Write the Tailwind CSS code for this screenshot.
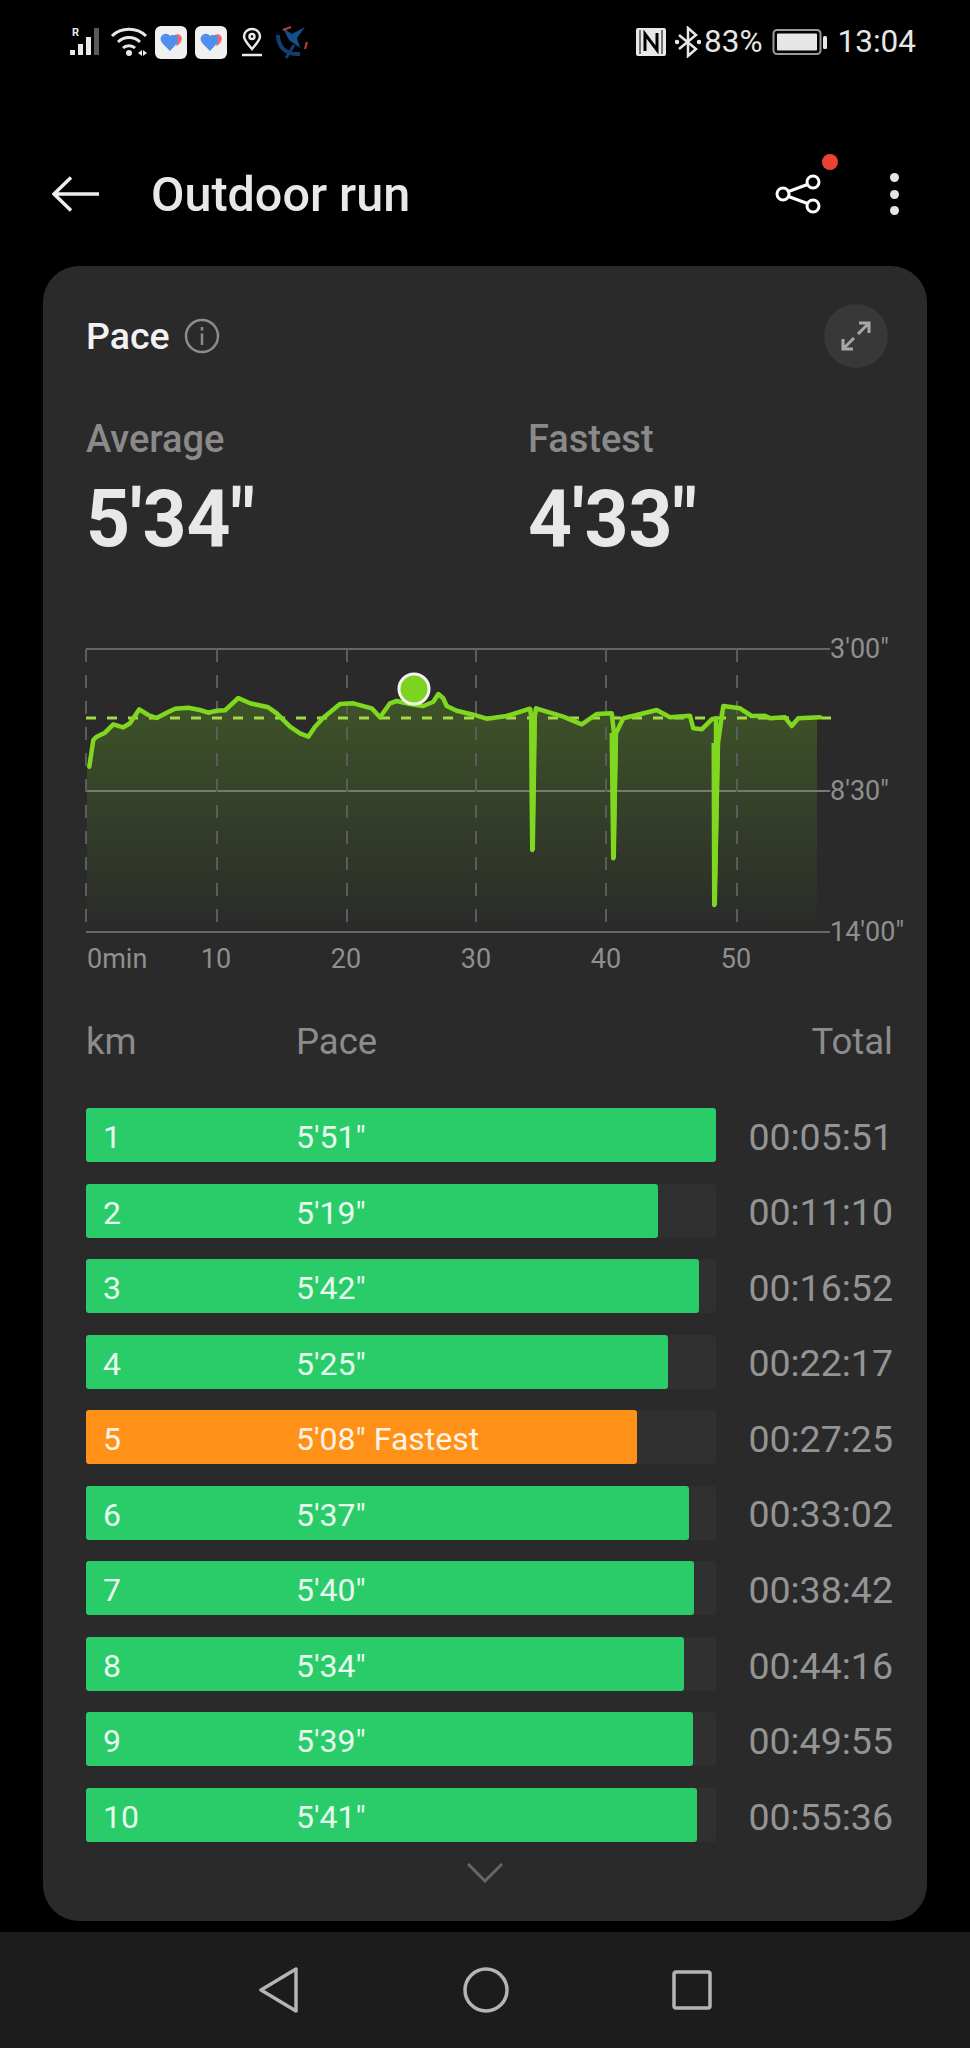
<!DOCTYPE html>
<html lang="en">
<head>
    <meta charset="UTF-8">
    <meta name="viewport" content="width=device-width, initial-scale=1.0">
    <title>Outdoor run</title>
    <script src="https://cdn.jsdelivr.net/npm/@tailwindcss/browser@4"></script>
</head>
<body class="bg-black font-[Roboto,sans-serif]">
<div class="flex h-[2048px] w-[970px] flex-col overflow-hidden">
    <!-- Status bar -->
    <div class="flex h-[84px] items-center justify-between pl-[68px] pr-[54px] text-[31.500px] leading-none text-[#e6e6e6]">
        <div class="flex items-center">
            <svg width="36" height="34" viewBox="0 0 36 34" fill="#e8e8e8">
                <text x="4" y="11" font-size="11" font-weight="700" font-family="Roboto">R</text>
                <rect x="2" y="25" width="5" height="5"/>
                <rect x="10" y="19" width="5" height="11"/>
                <rect x="18" y="12" width="5" height="18"/>
                <rect x="26" y="3" width="5" height="27" fill="#5a5a5a"/>
            </svg>
            <svg class="ml-[6px]" width="38" height="34" viewBox="0 0 38 34" fill="none" stroke="#e8e8e8" stroke-width="3">
                <path d="M2 11C11 2 27 2 36 11"/>
                <path d="M8 17C14 11 24 11 30 17"/>
                <path d="M13 23C16 20 22 20 25 23"/>
                <circle cx="19" cy="28" r="3" fill="#e8e8e8" stroke="none"/>
                <path d="M28 28l4-3v6zM33 25l4 3-4 3z" fill="#e8e8e8" stroke="none"/>
            </svg>
            <svg class="ml-[7px] rounded-[6px] bg-[#f0f0f0]" width="32" height="33" viewBox="0 0 32 33">
                <path d="M17 13C18 8 24 7 26 10C28 13 26 17 22 20Z" fill="#f0686a"/>
                <path d="M6 11C8 7 13 7 15 10C17 8 22 9 23 12C24 15 22 18 15 25C9 19 4 15 6 11Z" fill="#4f8ff0"/>
            </svg>
            <svg class="ml-[8px] rounded-[6px] bg-[#f0f0f0]" width="32" height="33" viewBox="0 0 32 33">
                <path d="M17 13C18 8 24 7 26 10C28 13 26 17 22 20Z" fill="#f0686a"/>
                <path d="M6 11C8 7 13 7 15 10C17 8 22 9 23 12C24 15 22 18 15 25C9 19 4 15 6 11Z" fill="#4f8ff0"/>
            </svg>
            <svg class="ml-[14px]" width="22" height="30" viewBox="0 0 22 30" fill="none" stroke="#e8e8e8" stroke-width="2.500">
                <path d="M11 22C6 16 3 13 3 9.500C3 5 6.500 2 11 2C15.500 2 19 5 19 9.500C19 13 16 16 11 22Z"/>
                <circle cx="11" cy="9.500" r="2.500"/>
                <path d="M1 28H21"/>
            </svg>
            <svg class="ml-[13px]" width="34" height="34" viewBox="0 0 34 34" fill="none">
                <path d="M2 10C2 22 10 30 24 29" stroke="#123f70" stroke-width="4"/>
                <path d="M7 3L13 15L24 23L21 13L29 2L16 9Z" fill="#14508a"/>
                <path d="M7 5L15 2" stroke="#c8353a" stroke-width="2"/>
                <path d="M31 17L29 24" stroke="#c8353a" stroke-width="2"/>
                <path d="M10 33L18 20" stroke="#123f70" stroke-width="3"/>
            </svg>
        </div>
        <div class="flex items-center">
            <svg width="32" height="30" viewBox="0 0 32 30">
                <rect x="1" y="1" width="30" height="28" rx="2" fill="#e8e8e8"/>
                <path d="M10 24V7L22 23V6" fill="none" stroke="#000" stroke-width="3"/>
                <path d="M5 3V27M27 3V27" stroke="#000" stroke-width="1"/>
            </svg>
            <svg class="ml-[8px]" width="26" height="32" viewBox="0 0 26 32" fill="none" stroke="#e8e8e8" stroke-width="2.500">
                <path d="M4 9L21 23L13 30V2L21 9L4 23"/>
                <circle cx="2" cy="16" r="1" fill="#e8e8e8"/>
                <circle cx="24" cy="16" r="1" fill="#e8e8e8"/>
            </svg>
            <span class="ml-[3px]">83%</span>
            <svg class="ml-[9px]" width="56" height="28" viewBox="0 0 56 28">
                <rect x="1.500" y="2" width="47" height="24" rx="3.500" fill="none" stroke="#9a9a9a" stroke-width="2"/>
                <rect x="5" y="5.500" width="40" height="17" rx="1" fill="#e6e6e6"/>
                <rect x="51" y="8" width="4" height="13" rx="1.500" fill="#e6e6e6"/>
            </svg>
            <span class="ml-[10px]">13:04</span>
        </div>
    </div>

    <!-- Title bar -->
    <div class="relative flex h-[182px] items-center pl-[52px] pr-[71px] pt-[38px]">
        <svg width="48" height="36" viewBox="0 0 48 36" fill="none" stroke="#eeeeee" stroke-width="3.500">
            <path d="M47 18H2M19 1.500L2 18L19 34.500"/>
        </svg>
        <h1 class="ml-[51px] pt-[2px] text-[48.500px] font-medium leading-none text-[#e8e8e8]">Outdoor run</h1>
        <div class="ml-auto flex items-center">
            <svg width="46" height="40" viewBox="0 0 46 40" fill="none" stroke="#ffffff" stroke-width="3">
                <circle cx="8" cy="20" r="6"/>
                <circle cx="38" cy="8" r="6"/>
                <circle cx="38" cy="32" r="6"/>
                <path d="M13.500 17.500L32.500 10.500M13.500 22.500L32.500 29.500"/>
            </svg>
            <div class="ml-[69px] flex flex-col gap-[7.500px]">
                <div class="h-[9px] w-[9px] rounded-full bg-[#e6e6e6]"></div>
                <div class="h-[9px] w-[9px] rounded-full bg-[#e6e6e6]"></div>
                <div class="h-[9px] w-[9px] rounded-full bg-[#e6e6e6]"></div>
            </div>
        </div>
        <div class="absolute left-[822px] top-[70px] h-4 w-4 rounded-full bg-[#ea4335]"></div>
    </div>

    <!-- Pace card -->
    <div class="mx-[43px] h-[1655px] w-[884px] rounded-[36px] bg-[#2a2a2a] pl-[43px] pr-[34px]">
        <div class="flex h-[140px] items-center justify-between pr-[5px]">
            <div class="flex items-center">
                <span class="text-[37.500px] font-medium text-[#f2f2f2]">Pace</span>
                <svg class="ml-[14px]" width="36" height="36" viewBox="0 0 36 36" fill="none" stroke="#8c8c8c" stroke-width="2.500">
                    <circle cx="18" cy="18" r="16"/>
                    <path d="M18 15.500V27M18 9V12.500"/>
                </svg>
            </div>
            <div class="flex h-16 w-16 items-center justify-center rounded-full bg-[#383838]">
                <svg width="30" height="30" viewBox="0 0 30 30" fill="none" stroke="#a8a8a8" stroke-width="3">
                    <path d="M17 13L28 2M18 2H28V12M13 17L2 28M2 18V28H12"/>
                </svg>
            </div>
        </div>

        <div class="grid h-[160px] grid-cols-[442px_1fr] content-start pt-[10px]">
            <div>
                <p class="text-[38px] font-medium leading-[46px] text-[#8a8a8a]">Average</p>
                <p class="mt-[14.500px] origin-left scale-x-[0.96] text-[80px] font-bold leading-[84px] text-[#e8e8e8]">5'34"</p>
            </div>
            <div>
                <p class="text-[38px] font-medium leading-[46px] text-[#8a8a8a]">Fastest</p>
                <p class="mt-[14.500px] origin-left scale-x-[0.96] text-[80px] font-bold leading-[84px] text-[#e8e8e8]">4'33"</p>
            </div>
        </div>

        <!-- Chart: viewBox uses page coordinates -->
        <svg class="-ml-[43px] mt-[54px] block" width="884" height="360" viewBox="43 620 884 360">
            <defs>
                <linearGradient id="areaFill" x1="0" y1="0" x2="0" y2="1">
                    <stop offset="0" stop-color="#7ed321" stop-opacity="0.25"/>
                    <stop offset="1" stop-color="#7ed321" stop-opacity="0"/>
                </linearGradient>
            </defs>
            <path fill="url(#areaFill)" d="M87 932V766.700L89.300 766.700L93.300 740L105 732.700L113.300 724.300L123.300 727.300L130 723.300L139.300 709.300L148.300 715L156.700 718L166.700 712.700L175 708.700L188.300 707.700L200 710L208.300 712.700L225 710.300L238.300 698L250 703.300L268.300 707.300L276.700 713.300L290 726.700L300 733.300L308.300 736.700L315 726.700L323.300 717.700L340 704L353.300 703.300L371.700 708.300L380 717.300L390 703.300L396.700 701L410 704L423.300 706L433.300 701.700L438.300 694L443.300 698.300L446.700 706L456.700 710.700L473.300 714.700L486.700 718.700L506.700 716L530 708.700L536 708.300L546.700 711.700L563.300 716.700L581.700 724.300L596.700 714L611.700 713.300L623.300 718.300L636.700 715L656.700 710L670 717.300L690 715.700L693.300 728.300L701.700 729.300L711.700 719.300L716 718.300L723.300 706L740 708.300L751.700 716L765 715.700L770 718.300L785 717.300L791.700 726L798.300 718.300L817 717.300V932Z"/>
            <g stroke="#666666" stroke-width="2">
                <path d="M86 649H830M86 932H830"/>
                <path stroke="#7a7a72" d="M86 791H830"/>
            </g>
            <g stroke="#5c5c5c" stroke-width="2" stroke-dasharray="13 13" fill="none">
                <path d="M86 649V932M217 649V932M347 649V932M476 649V932M606 649V932M737 649V932"/>
            </g>
            <path d="M86 718H838" stroke="#a6d84a" stroke-width="3" stroke-dasharray="10 11" fill="none"/>
            <path fill="none" stroke="#7fd81f" stroke-width="4.500" stroke-linejoin="round" stroke-linecap="round" d="M89.300 766.700L93.300 740L96.700 736.700L105 732.700L113.300 724.300L123.300 727.300L130 723.300L139.300 709.300L148.300 715L156.700 718L166.700 712.700L175 708.700L188.300 707.700L200 710L208.300 712.700L216.700 710.700L225 710.300L238.300 698L250 703.300L268.300 707.300L276.700 713.300L290 726.700L300 733.300L308.300 736.700L315 726.700L323.300 717.700L340 704L353.300 703.300L371.700 708.300L380 717.300L390 703.300L396.700 701L410 704L423.300 706L433.300 701.700L438.300 694L443.300 698.300L446.700 706L456.700 710.700L473.300 714.700L486.700 718.700L506.700 716L530 708.700L531.700 720L532.300 850L534.300 720L536 708.300L546.700 711.700L563.300 716.700L581.700 724.300L596.700 714L611.700 713.300L614 733.300L613.300 858.300L616 733.300L623.300 718.300L636.700 715L656.700 710L670 717.300L690 715.700L693.300 728.300L701.700 729.300L711.700 719.300L716 718.300L716 743L714.300 905L718 743L723.300 706L740 708.300L751.700 716L765 715.700L770 718.300L785 717.300L791.700 726L798.300 718.300L820 717.300"/>
            <path fill="#7fd81f" d="M529 720H537L535 850H530ZM609.500 733H618L616 858H611ZM711.500 743H720L717 905H712Z"/>
            <circle cx="414" cy="689" r="15" fill="#7ed321" stroke="#f2f2f2" stroke-width="3"/>
            <g font-size="27" fill="#8f8f8f" font-family="Roboto">
                <text x="87" y="968">0min</text>
                <text x="216" y="968" text-anchor="middle">10</text>
                <text x="346" y="968" text-anchor="middle">20</text>
                <text x="476" y="968" text-anchor="middle">30</text>
                <text x="606" y="968" text-anchor="middle">40</text>
                <text x="736" y="968" text-anchor="middle">50</text>
                <text x="830" y="658">3'00"</text>
                <text x="830" y="800">8'30"</text>
                <text x="830" y="941">14'00"</text>
            </g>
        </svg>

        <!-- Splits table -->
        <div class="mt-[41px] flex h-[43px] items-center text-[36.500px] leading-none text-[#8c8c8c]">
            <span class="w-[210px]">km</span>
            <span>Pace</span>
            <span class="ml-auto">Total</span>
        </div>
        <div class="mt-[44px] flex flex-col gap-[21.550px]">
            <div class="flex items-center justify-between">
                <div class="h-[54px] w-[630px] rounded-[3px] bg-[#303030]">
                    <div class="flex h-full w-[630px] items-center rounded-[3px] bg-[#2acc6a] pt-[4px] text-[32px] text-[#e6fbee]"><span class="w-[210px] pl-[17px]">1</span><span>5'51"</span></div>
                </div>
                <span class="pt-[5px] text-[37.500px] leading-none text-[#949494]">00:05:51</span>
            </div>
            <div class="flex items-center justify-between">
                <div class="h-[54px] w-[630px] rounded-[3px] bg-[#303030]">
                    <div class="flex h-full w-[572px] items-center rounded-[3px] bg-[#2acc6a] pt-[4px] text-[32px] text-[#e6fbee]"><span class="w-[210px] pl-[17px]">2</span><span>5'19"</span></div>
                </div>
                <span class="pt-[5px] text-[37.500px] leading-none text-[#949494]">00:11:10</span>
            </div>
            <div class="flex items-center justify-between">
                <div class="h-[54px] w-[630px] rounded-[3px] bg-[#303030]">
                    <div class="flex h-full w-[613px] items-center rounded-[3px] bg-[#2acc6a] pt-[4px] text-[32px] text-[#e6fbee]"><span class="w-[210px] pl-[17px]">3</span><span>5'42"</span></div>
                </div>
                <span class="pt-[5px] text-[37.500px] leading-none text-[#949494]">00:16:52</span>
            </div>
            <div class="flex items-center justify-between">
                <div class="h-[54px] w-[630px] rounded-[3px] bg-[#303030]">
                    <div class="flex h-full w-[582px] items-center rounded-[3px] bg-[#2acc6a] pt-[4px] text-[32px] text-[#e6fbee]"><span class="w-[210px] pl-[17px]">4</span><span>5'25"</span></div>
                </div>
                <span class="pt-[5px] text-[37.500px] leading-none text-[#949494]">00:22:17</span>
            </div>
            <div class="flex items-center justify-between">
                <div class="h-[54px] w-[630px] rounded-[3px] bg-[#303030]">
                    <div class="flex h-full w-[551px] items-center rounded-[3px] bg-[#ff9119] pt-[4px] text-[32px] text-[#fff3e3]"><span class="w-[210px] pl-[17px]">5</span><span>5'08" Fastest</span></div>
                </div>
                <span class="pt-[5px] text-[37.500px] leading-none text-[#949494]">00:27:25</span>
            </div>
            <div class="flex items-center justify-between">
                <div class="h-[54px] w-[630px] rounded-[3px] bg-[#303030]">
                    <div class="flex h-full w-[603px] items-center rounded-[3px] bg-[#2acc6a] pt-[4px] text-[32px] text-[#e6fbee]"><span class="w-[210px] pl-[17px]">6</span><span>5'37"</span></div>
                </div>
                <span class="pt-[5px] text-[37.500px] leading-none text-[#949494]">00:33:02</span>
            </div>
            <div class="flex items-center justify-between">
                <div class="h-[54px] w-[630px] rounded-[3px] bg-[#303030]">
                    <div class="flex h-full w-[608px] items-center rounded-[3px] bg-[#2acc6a] pt-[4px] text-[32px] text-[#e6fbee]"><span class="w-[210px] pl-[17px]">7</span><span>5'40"</span></div>
                </div>
                <span class="pt-[5px] text-[37.500px] leading-none text-[#949494]">00:38:42</span>
            </div>
            <div class="flex items-center justify-between">
                <div class="h-[54px] w-[630px] rounded-[3px] bg-[#303030]">
                    <div class="flex h-full w-[598px] items-center rounded-[3px] bg-[#2acc6a] pt-[4px] text-[32px] text-[#e6fbee]"><span class="w-[210px] pl-[17px]">8</span><span>5'34"</span></div>
                </div>
                <span class="pt-[5px] text-[37.500px] leading-none text-[#949494]">00:44:16</span>
            </div>
            <div class="flex items-center justify-between">
                <div class="h-[54px] w-[630px] rounded-[3px] bg-[#303030]">
                    <div class="flex h-full w-[607px] items-center rounded-[3px] bg-[#2acc6a] pt-[4px] text-[32px] text-[#e6fbee]"><span class="w-[210px] pl-[17px]">9</span><span>5'39"</span></div>
                </div>
                <span class="pt-[5px] text-[37.500px] leading-none text-[#949494]">00:49:55</span>
            </div>
            <div class="flex items-center justify-between">
                <div class="h-[54px] w-[630px] rounded-[3px] bg-[#303030]">
                    <div class="flex h-full w-[611px] items-center rounded-[3px] bg-[#2acc6a] pt-[4px] text-[32px] text-[#e6fbee]"><span class="w-[210px] pl-[17px]">10</span><span>5'41"</span></div>
                </div>
                <span class="pt-[5px] text-[37.500px] leading-none text-[#949494]">00:55:36</span>
            </div>
        </div>
        <div class="-ml-[43px] mt-[21px] flex w-[884px] justify-center">
            <svg width="36" height="20" viewBox="0 0 36 20" fill="none" stroke="#666666" stroke-width="3">
                <path d="M1 1L18 18L35 1"/>
            </svg>
        </div>
    </div>

    <!-- Navigation bar -->
    <div class="mt-[11px] flex h-[116px] items-center justify-center gap-[163px] bg-[#1c1c1c]">
        <svg width="42" height="46" viewBox="0 0 42 46" fill="none" stroke="#b4b4b4" stroke-width="3.500" stroke-linejoin="round">
            <path d="M38 2V44L3 23Z"/>
        </svg>
        <svg width="46" height="46" viewBox="0 0 46 46" fill="none" stroke="#b4b4b4" stroke-width="3.500">
            <circle cx="23" cy="23" r="21"/>
        </svg>
        <svg width="40" height="40" viewBox="0 0 40 40" fill="none" stroke="#b4b4b4" stroke-width="3.500">
            <rect x="2" y="2" width="36" height="36" rx="2"/>
        </svg>
    </div>
</div>
</body>
</html>
